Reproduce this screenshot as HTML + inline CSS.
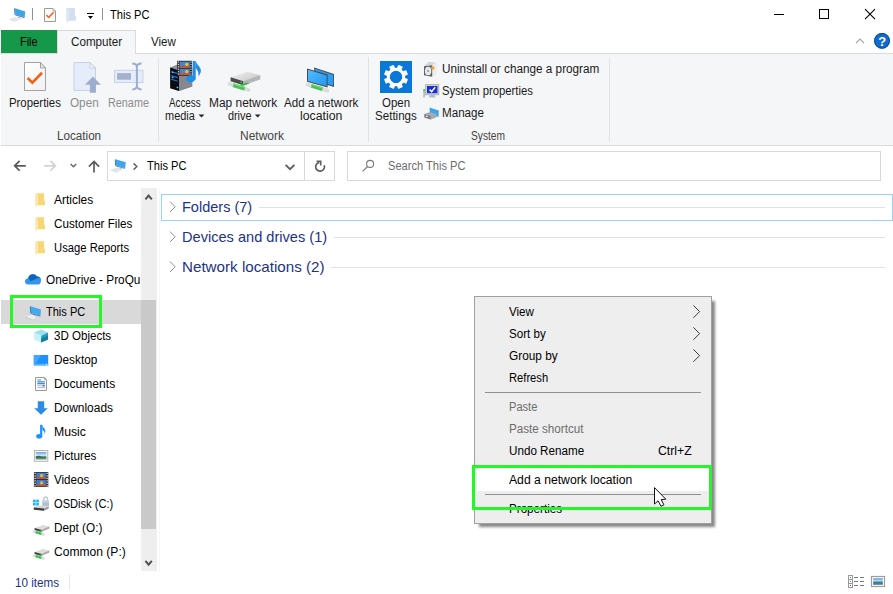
<!DOCTYPE html>
<html>
<head>
<meta charset="utf-8">
<title>This PC</title>
<style>
html,body{margin:0;padding:0;}
body{width:893px;height:594px;overflow:hidden;background:#fff;position:relative;font-family:"Liberation Sans",sans-serif;font-size:12px;color:#1e1e1e;}
.a{position:absolute;white-space:nowrap;}
.t{position:absolute;white-space:nowrap;line-height:14px;font-size:12px;color:#1a1a1a;transform-origin:0 0;}
.c{text-align:center;}
.dim{color:#8a8a8a;}
svg{position:absolute;overflow:visible;}
</style>
</head>
<body>
<!-- TITLE BAR -->
<div class="a" id="titlebar" style="left:0;top:0;width:893px;height:30px;background:#fff;"></div>
<div class="a" style="left:32px;top:8px;width:1px;height:12px;background:#909090;"></div>
<div class="a" style="left:102px;top:8px;width:1px;height:12px;background:#909090;"></div>


<!-- title icons -->
<svg style="left:0;top:0;" width="110" height="30" viewBox="0 0 110 30">
  <!-- PC -->
  <polygon points="15,8.3 25.2,11.6 24.7,17.3 15.5,14.6" fill="#3ea4e8"/>
  <polygon points="15,8.3 15.5,14.6 14.6,14.9 14.2,8.8" fill="#1c6fb5"/>
  <polygon points="15.5,14.6 24.7,17.3 24.3,17.9 15.1,15.2" fill="#2a7cc4"/>
  <polygon points="17.5,16.6 21.5,17.8 21,18.8 17,17.6" fill="#b9c1c9"/>
  <polygon points="9.3,19 14.5,17 20.5,19.6 15,21.6" fill="#e4e7ea"/>
  <polygon points="9.3,19 15,21.6 15,22.1 9.3,19.5" fill="#c5cad0"/>
  <!-- properties small -->
  <path d="M44.5,8.5 H53 L55.5,11 V21.5 H44.5 Z" fill="#fdfdfd" stroke="#9b9b9b" stroke-width="1"/>
  <path d="M53,8.5 V11 H55.5" fill="#e8e8e8" stroke="#9b9b9b" stroke-width="0.8"/>
  <path d="M46.3,15.2 L48.8,17.3 L53.6,12.2" fill="none" stroke="#ee6a2c" stroke-width="1.6"/>
  <!-- new folder disabled -->
  <path d="M66,8 H74.9 V15.8 H75.9 V20.7 H68 L66,20.7 Z" fill="#d3dfef"/>
  <path d="M66,8 L68.8,9.5 V20.7 L68,22.4 L66,20.7 Z" fill="#dfe8f4"/>
  <!-- dropdown -->
  <rect x="87" y="13" width="7" height="1" fill="#000"/>
  <polygon points="88,16 93,16 90.5,19" fill="#000"/>
</svg>


<svg style="left:753px;top:0;" width="140" height="60" viewBox="753 0 140 60">
  <rect x="774" y="14" width="10" height="1" fill="#000"/>
  <rect x="819.5" y="9.5" width="9" height="9" fill="none" stroke="#000" stroke-width="1"/>
  <path d="M865,9.2 L875,19.2 M875,9.2 L865,19.2" stroke="#000" stroke-width="1.1" fill="none"/>
  <path d="M856,43 L860,39 L864,43" stroke="#a8a8a8" stroke-width="1.1" fill="none"/>
  <circle cx="882" cy="40.8" r="7.9" fill="#0f6bcf"/>
  <circle cx="882" cy="40.8" r="7.4" fill="none" stroke="#0a4c9c" stroke-width="1"/>
  <text x="882.2" y="45.6" text-anchor="middle" font-family="Liberation Sans" font-weight="bold" font-size="13" fill="#fff">?</text>
</svg>

<!-- TAB ROW -->
<div class="a" style="left:1px;top:53px;width:892px;height:93px;background:#f5f6f7;border-top:1px solid #dadbdc;border-bottom:1px solid #dadbdc;box-sizing:border-box;"></div>
<div class="a" style="left:1px;top:30px;width:56px;height:23px;background:#16984a;"></div>
<div class="a" style="left:57px;top:30px;width:79px;height:24px;background:#f5f6f7;border:1px solid #dadbdc;border-bottom:none;box-sizing:border-box;"></div>

<!-- RIBBON -->
<div class="a" style="left:158px;top:57px;width:1px;height:85px;background:#e1e2e3;"></div>

<div class="a" style="left:368px;top:57px;width:1px;height:85px;background:#e1e2e3;"></div>

<div class="a" style="left:609px;top:57px;width:1px;height:85px;background:#e1e2e3;"></div>

<!-- ADDRESS BAR -->
<div class="a" style="left:107px;top:151px;width:228px;height:30px;border:1px solid #d9d9d9;box-sizing:border-box;background:#fff;"></div>
<div class="a" style="left:304px;top:152px;width:1px;height:28px;background:#d9d9d9;"></div>
<div class="a" style="left:347px;top:151px;width:534px;height:30px;border:1px solid #d9d9d9;box-sizing:border-box;background:#fff;"></div>

<!-- NAV PANE -->
<div class="a" style="left:1px;top:300px;width:140px;height:24px;background:#d9d9d9;"></div>
<!-- scrollbar -->
<div class="a" style="left:141px;top:188px;width:16px;height:383px;background:#eeeeee;"></div>
<div class="a" style="left:159px;top:188px;width:1px;height:383px;background:#f6f6f6;"></div>
<div class="a" style="left:141px;top:300px;width:15px;height:229px;background:#c9c9c9;"></div>
<!-- green highlight This PC -->

<!-- CONTENT -->
<div class="a" style="left:161px;top:194px;width:732px;height:27px;border:1px solid #99d1ff;box-sizing:border-box;"></div>
<div class="a" style="left:259px;top:207px;width:626px;height:1px;background:#e2e2e2;"></div>
<div class="a" style="left:334px;top:237px;width:551px;height:1px;background:#e2e2e2;"></div>
<div class="a" style="left:331px;top:267px;width:554px;height:1px;background:#e2e2e2;"></div>

<!-- CONTEXT MENU -->
<div class="a" id="ctx" style="left:474px;top:296px;width:238px;height:228px;background:#eeeeee;border:1px solid #a0a0a0;box-sizing:border-box;box-shadow:4px 4px 2.5px -1px rgba(0,0,0,0.47);"></div>
<div class="a" style="left:485px;top:392px;width:216px;height:1px;background:#919191;"></div>
<div class="a" style="left:477px;top:468px;width:233px;height:23px;background:#fff;"></div>
<div class="a" style="left:485px;top:494px;width:216px;height:1px;background:#919191;"></div>

<!-- RIBBON ICONS -->
<svg style="left:0;top:0;" width="893" height="594" viewBox="0 0 893 594">
<defs>
  <linearGradient id="gpage" x1="0" y1="0" x2="1" y2="1"><stop offset="0" stop-color="#ffffff"/><stop offset="1" stop-color="#f1f1f1"/></linearGradient>
  <linearGradient id="gblue" x1="0" y1="0" x2="1" y2="1"><stop offset="0" stop-color="#55bcff"/><stop offset="1" stop-color="#1f97f0"/></linearGradient>
  <linearGradient id="gdrv" x1="0" y1="0" x2="1" y2="1"><stop offset="0" stop-color="#f2f2f2"/><stop offset="1" stop-color="#bdbdbd"/></linearGradient>
</defs>
<!-- Properties -->
<path d="M24.5,62.5 H40.5 L45.5,68 V90.5 H24.5 Z" fill="url(#gpage)" stroke="#a3a3a3" stroke-width="1"/>
<path d="M40.5,62.5 V68 H45.5 Z" fill="#e9e9e9" stroke="#a3a3a3" stroke-width="1" stroke-linejoin="round"/>
<path d="M27.6,78 L32.4,82.6 L42,72.8" fill="none" stroke="#f0621e" stroke-width="2.7"/>
<!-- Open (disabled) -->
<path d="M74,62.5 H90 L95.5,68 V90.5 H74 Z" fill="#e6edfa" stroke="#c3d1e9" stroke-width="1"/>
<path d="M90,62.5 V68 H95.5 Z" fill="#f1f5fc" stroke="#c3d1e9" stroke-width="1" stroke-linejoin="round"/>
<path d="M92.9,76.6 L100.9,84.8 H95.9 V92.8 H89.9 V84.8 H84.9 Z" fill="#9eadcc"/>
<!-- Rename (disabled) -->
<rect x="114.5" y="70.3" width="28.4" height="12.2" fill="#e6edfa" stroke="#c3d1e9" stroke-width="1"/>
<rect x="117.1" y="73.1" width="13.9" height="6.6" fill="#a5b2cf"/>
<path d="M132.2,63.6 Q136.6,63.6 136.9,67 Q137.2,63.6 141.6,63.6 M136.9,66 V87 M132.2,89.4 Q136.6,89.4 136.9,86 Q137.2,89.4 141.6,89.4" fill="none" stroke="#9eadcc" stroke-width="2"/>

<!-- Access media -->
<polygon points="170.2,67.6 178.8,63.8 192.2,67.2 192.2,86.6 179,91 170.2,88.2" fill="#8f9398"/>
<polygon points="170.2,67.6 179,70.4 179,91 170.2,88.2" fill="#0c0c0e"/>
<polygon points="179,70.4 192.2,67.2 192.2,86.6 179,91" fill="#85898f"/>
<path d="M171.3,71.6 L177.8,73.6 M171.3,75.6 L177.8,77.6 M171.3,79.2 L177.8,81.2" stroke="#1f6fd6" stroke-width="1.1"/>
<circle cx="172.6" cy="72.3" r="0.9" fill="#39c8ff"/><circle cx="172.6" cy="77.4" r="0.9" fill="#39c8ff"/><circle cx="177.4" cy="87.4" r="0.9" fill="#39c8ff"/>
<rect x="177.2" y="60.8" width="15" height="15" fill="#2b2b2e"/>
<rect x="179.6" y="61.6" width="10.2" height="6.2" fill="#3f86d8"/>
<rect x="179.6" y="68.8" width="10.2" height="6.2" fill="#3f86d8"/>
<rect x="179.6" y="65.6" width="10.2" height="2.2" fill="#c9562b"/><rect x="179.6" y="73" width="10.2" height="2" fill="#c9562b"/>
<circle cx="186.8" cy="64.4" r="1.7" fill="#e7c232"/><circle cx="186.8" cy="71.6" r="1.7" fill="#e7c232"/>
<path d="M178.4,61.5 V75.5 M191,61.5 V75.5" stroke="#e8e8e8" stroke-width="1" stroke-dasharray="1.2 1.2"/>
<rect x="193" y="61" width="2.7" height="18.6" fill="#1c8fe9"/>
<path d="M195.6,61 Q196.6,64 199.2,66.4 Q202,69.6 200.2,73.6 Q199.6,75.2 198.2,76 Q199.4,72 195.6,68 Z" fill="#1c8fe9"/>
<ellipse cx="190.6" cy="78.8" rx="4.6" ry="3.6" fill="#1c8fe9"/>

<polygon points="198.6,114.6 204.4,114.6 201.5,117.6" fill="#222"/>
<polygon points="254.8,114.6 260.6,114.6 257.7,117.6" fill="#222"/>
<!-- Map network drive -->
<polygon points="230.6,77.2 247.4,71.8 260.2,75.2 260.2,79.2 243.4,85.2 230.6,81.2" fill="url(#gdrv)"/>
<polygon points="230.6,77.2 243.4,81.2 243.4,85.2 230.6,81.2" fill="#4b4b4b"/>
<polygon points="243.4,81.2 260.2,75.2 260.2,79.2 243.4,85.2" fill="#b5b5b5"/>
<rect x="240.4" y="81.6" width="1.8" height="1.2" fill="#43d15a" transform="rotate(17 241 82)"/>
<path d="M229.6,84 L248.6,90" stroke="#dcdcdc" stroke-width="3.8" stroke-linecap="round"/>
<path d="M233.2,85.1 L244.6,88.7" stroke="#45c453" stroke-width="3.8"/>
<path d="M233.2,84.0 L244.6,87.6" stroke="#7fdc88" stroke-width="1"/>
<polygon points="239.6,85 246.6,82.6 249.8,83.6 242.8,86.0" fill="#3fb84d"/>

<!-- Add a network location -->
<polygon points="314.2,67.4 334,73.9 334,87 314.2,81" fill="#4a4a4a"/>
<polygon points="315.2,68.8 333.2,74.7 333.2,85.8 315.2,80.3" fill="#2a9df4"/>
<polygon points="307,68.4 327.6,74.6 327.6,87.6 307,81.8" fill="#4a4a4a"/>
<polygon points="308,69.8 326.6,75.4 326.6,86.2 308,81" fill="url(#gblue)"/>
<path d="M307.6,84.6 L327.4,90.6" stroke="#dcdcdc" stroke-width="3.8" stroke-linecap="round"/>
<path d="M311.4,85.75 L322.4,89.1" stroke="#45c453" stroke-width="3.8"/>
<path d="M311.4,84.7 L322.4,88.0" stroke="#7fdc88" stroke-width="1"/>

<!-- Settings -->
<rect x="380" y="61" width="32" height="32" fill="#0a78d7"/>
<g transform="translate(396,76.9) rotate(22.5)" fill="#fff">
  <circle r="9.2"/>
  <g>
  <rect x="-2.5" y="-12" width="5" height="6" rx="0.6"/>
  <rect x="-2.5" y="6" width="5" height="6" rx="0.6"/>
  <rect x="-12" y="-2.5" width="6" height="5" rx="0.6"/>
  <rect x="6" y="-2.5" width="6" height="5" rx="0.6"/>
  </g>
  <g transform="rotate(45)">
  <rect x="-2.5" y="-12" width="5" height="6" rx="0.6"/>
  <rect x="-2.5" y="6" width="5" height="6" rx="0.6"/>
  <rect x="-12" y="-2.5" width="6" height="5" rx="0.6"/>
  <rect x="6" y="-2.5" width="6" height="5" rx="0.6"/>
  </g>
  <circle r="6.2" fill="#0a78d7"/>
</g>

<!-- Uninstall -->
<polygon points="424,66.2 428.6,61.8 436.8,62.8 432.2,65.2" fill="#d4d7d9"/>
<polygon points="432.2,65.2 436.8,62.8 436.8,74.4 432.2,76.8" fill="#ececec"/>
<polygon points="424,66.2 432.2,65.2 432.2,76.8 424,75.2" fill="#596268"/>
<ellipse cx="428.1" cy="71" rx="3.2" ry="4.3" fill="#e6ebee"/>
<ellipse cx="428.1" cy="71" rx="0.9" ry="1.3" fill="#8d979e"/>
<circle cx="432.8" cy="68" r="1.8" fill="#f2a23a"/>
<!-- System properties -->
<rect x="425.6" y="84.6" width="13.2" height="10.2" fill="#cfd1d3" stroke="#a9acaf" stroke-width="0.8"/>
<rect x="427" y="86" width="10.4" height="7.2" fill="#1a2fd0"/>
<path d="M429.6,89.6 L431.6,91.6 L435.2,87.2" stroke="#fff" stroke-width="1.5" fill="none"/>
<polygon points="430.2,94.8 434.4,94.8 435.8,97.4 428.6,97.4" fill="#b9bcbf"/>
<rect x="423.3" y="90.4" width="1.6" height="7" fill="#b4b8bb"/>
<rect x="423.3" y="89" width="1.6" height="2.2" fill="#3ccf4a"/>
<!-- Manage -->
<polygon points="429.6,107.6 438.8,110.6 438.6,117 429.8,114.2" fill="#3ea4f0"/>
<polygon points="424.4,114 430,112 436.4,114.2 436.4,117.6 430.6,119.4 424.4,117.4" fill="#a7abaf"/>
<polygon points="424.4,114 430.6,116 430.6,119.4 424.4,117.4" fill="#7c8185"/>
<rect x="426" y="115.6" width="1.6" height="1.4" fill="#e8e8e8"/>
</svg>
<!-- ADDRESS ICONS -->
<svg style="left:0;top:0;" width="893" height="594" viewBox="0 0 893 594">
<path d="M25.8,165.8 H14.8 M19.6,160.9 L14.6,165.8 L19.6,170.7" fill="none" stroke="#5b5b5b" stroke-width="1.7"/>
<path d="M44.2,165.8 H55.2 M50.4,160.9 L55.4,165.8 L50.4,170.7" fill="none" stroke="#d2d2d2" stroke-width="1.7"/>
<path d="M70.6,164 L73.4,166.8 L76.2,164" fill="none" stroke="#666" stroke-width="1.4"/>
<path d="M94,172.4 V161.8 M88.9,166.6 L94,161.5 L99.1,166.6" fill="none" stroke="#5b5b5b" stroke-width="1.7"/>
<!-- PC icon -->
<polygon points="115.6,159.2 125.8,162.2 125.1,168.2 116.2,165.6" fill="#3ea6ee"/>
<polygon points="115.6,159.2 116.2,165.6 115.3,165.9 114.8,159.7" fill="#1c6fb5"/>
<polygon points="116.2,165.6 125.1,168.2 124.7,168.8 115.8,166.2" fill="#2a7cc4"/>
<polygon points="118.6,167.3 122,168.3 121.6,169.3 118.2,168.3" fill="#b9c1c9"/>
<polygon points="110.6,169.7 116.6,167.6 122.6,169.8 116.8,172.2" fill="#e3e6e9"/>
<polygon points="110.6,169.7 116.8,172.2 116.8,172.8 110.6,170.3" fill="#c5cad0"/>
<path d="M133.6,163.4 L136.8,166.5 L133.6,169.6" fill="none" stroke="#666" stroke-width="1.5"/>
<path d="M285.6,164.8 L290,169.2 L294.4,164.8" fill="none" stroke="#5f5f5f" stroke-width="1.9"/>
<!-- refresh -->
<path d="M324.2,165.2 A4.4,4.4 0 1 1 319.4,162.4" fill="none" stroke="#5f5f5f" stroke-width="1.7"/>
<path d="M316.6,161.3 H320.7 V165.4" fill="none" stroke="#5f5f5f" stroke-width="1.6"/>
<!-- search -->
<circle cx="370.1" cy="163.9" r="3.5" fill="none" stroke="#7a7a7a" stroke-width="1.1"/>
<path d="M367.6,166.5 L362.6,171.4" stroke="#7a7a7a" stroke-width="1.1"/>
</svg>
<!-- NAV ICONS -->
<svg style="left:0;top:0;" width="893" height="594" viewBox="0 0 893 594">
<defs><linearGradient id="gpic" x1="0" y1="0" x2="0" y2="1"><stop offset="0" stop-color="#5fa8e8"/><stop offset="0.45" stop-color="#cfe6f5"/><stop offset="0.6" stop-color="#5d8f6a"/><stop offset="1" stop-color="#a8c2b8"/></linearGradient></defs>
<path d="M36.4,193.3 H44.1 V200.8 H44.9 V205.2 H37.6 Z" fill="#f7d774"/><path d="M35.2,194.0 L38,194.8 V205.6 L36.6,206.8 L35.2,205.4 Z" fill="#fbe8aa"/>
<path d="M36.4,217.3 H44.1 V224.8 H44.9 V229.2 H37.6 Z" fill="#f7d774"/><path d="M35.2,218.0 L38,218.8 V229.6 L36.6,230.8 L35.2,229.4 Z" fill="#fbe8aa"/>
<path d="M36.4,241.3 H44.1 V248.8 H44.9 V253.2 H37.6 Z" fill="#f7d774"/><path d="M35.2,242.0 L38,242.8 V253.6 L36.6,254.8 L35.2,253.4 Z" fill="#fbe8aa"/>
<!-- OneDrive -->
<path d="M28.6,284.6 Q24.9,284.4 25,281.2 Q25.2,278.6 28.2,278.2 Q29,274.4 33,274.3 Q35.6,274.3 37,276.6 Q40.2,276.2 41,279 Q41.4,284.4 38,284.6 Z" fill="#2f97ea"/>
<path d="M28.2,278.2 Q29,274.4 33,274.3 Q35.6,274.3 37,276.6 Q38.6,276.4 39.8,277.2 L30.6,281.2 Q29.4,279 28.2,278.2 Z" fill="#0f62bf"/>
<!-- This PC -->
<polygon points="30.6,306.2 41,309.6 40.5,315.8 31.3,313.3" fill="#45a9ee"/>
<polygon points="30.6,306.2 31.3,313.3 30.4,313.6 29.8,306.8" fill="#1c6fb5"/>
<polygon points="31.3,313.3 40.5,315.8 40.1,316.5 30.9,314" fill="#3a7fb8"/>
<polygon points="33.8,315.2 37.2,316.2 36.8,317.2 33.4,316.2" fill="#aab2ba"/>
<polygon points="25.6,316.8 31.8,314.8 37.2,316.9 32.6,319.6" fill="#eceef0"/>
<polygon points="25.6,316.8 32.6,319.6 32.6,320.2 25.6,317.4" fill="#bfc4ca"/>
<!-- 3D Objects -->
<polygon points="41.2,329.4 48,332.5 41.2,335.7 33.9,332.5" fill="#9fe0ec"/>
<polygon points="33.9,332.5 41.2,335.7 41.2,342.5 33.9,339.5" fill="#c9f0f6"/>
<polygon points="41.2,335.7 48,332.5 48,339.5 41.2,342.5" fill="#1b9fc6"/>
<polygon points="41.2,338.5 48,335.5 48,339.5 41.2,342.5" fill="#16809f"/>
<!-- Desktop -->
<rect x="33.8" y="355" width="14.4" height="10.4" fill="#1e90ff"/>
<polygon points="33.8,355 41,355 36,363.6 33.8,363.6" fill="#45a6ff"/>
<rect x="33.8" y="363.8" width="14.4" height="1.6" fill="#58b2ff"/>
<rect x="46" y="364" width="1.2" height="1" fill="#fff"/>
<!-- Documents -->
<path d="M35.5,377.5 H44.4 L46.5,379.6 V390.5 H35.5 Z" fill="#fcfcfc" stroke="#9a9a9a" stroke-width="1"/>
<path d="M44.4,377.5 V379.6 H46.5" fill="none" stroke="#9a9a9a" stroke-width="0.8"/>
<path d="M37.4,381.8 H44.8 M37.4,383.6 H44.8" stroke="#3b8de0" stroke-width="1.2"/>
<path d="M37.4,380 H41" stroke="#3b8de0" stroke-width="1"/>
<path d="M37.4,385.6 H41.6 M37.4,387.6 H44.8" stroke="#b5b5b5" stroke-width="1"/>
<rect x="42.4" y="384.8" width="2.4" height="1.8" fill="#4a86c8"/>
<!-- Downloads -->
<path d="M37.8,401.2 H44.2 V408.2 H47.8 L41,414.8 L34.2,408.2 H37.8 Z" fill="#2b8be6"/>
<!-- Music -->
<rect x="40.1" y="424.8" width="2.2" height="11.6" fill="#1e90ff"/>
<path d="M42.3,424.8 Q42.8,427 44.4,428.6 Q46.2,430.8 44.6,434.4 Q45,431.6 42.3,429.6 Z" fill="#1e90ff"/>
<ellipse cx="39.2" cy="436.2" rx="3" ry="2.3" fill="#1e90ff"/>
<!-- Pictures -->
<rect x="34.4" y="450.5" width="13.4" height="10.8" fill="#fbfbfb" stroke="#b4b4b4" stroke-width="1"/>
<rect x="35.8" y="452" width="10.6" height="7.8" fill="url(#gpic)"/>
<path d="M35.8,456.6 Q39,455 41,456.4 Q43.6,457.6 46.4,457.4 V458.4 H35.8 Z" fill="#3f6b52"/>
<!-- Videos -->
<rect x="33.9" y="472" width="14.4" height="15" fill="#333335"/>
<rect x="36.4" y="472.8" width="9.4" height="6.2" fill="#3d7fd6"/>
<rect x="36.4" y="480" width="9.4" height="6.2" fill="#3d7fd6"/>
<rect x="36.4" y="477" width="9.4" height="2" fill="#c4562e"/><rect x="36.4" y="484.4" width="9.4" height="1.8" fill="#c4562e"/>
<circle cx="41.6" cy="475.6" r="1.6" fill="#e3bd3a"/><circle cx="41.6" cy="482.8" r="1.6" fill="#e3bd3a"/>
<path d="M35.1,472.8 V486.6 M47.1,472.8 V486.6" stroke="#ededed" stroke-width="1.2" stroke-dasharray="1.3 1.2"/>
<!-- OSDisk -->
<rect x="33" y="499.6" width="2.7" height="2.7" fill="#1db8f5"/><rect x="36.2" y="499.6" width="2.7" height="2.7" fill="#1db8f5"/>
<rect x="33" y="502.8" width="2.7" height="2.7" fill="#1db8f5"/><rect x="36.2" y="502.8" width="2.7" height="2.7" fill="#1db8f5"/>
<path d="M43.8,501 V499.2 Q43.8,497 45.7,497 Q47.6,497 47.6,499.2 V501" fill="none" stroke="#c0c8cf" stroke-width="1.3"/>
<rect x="42.3" y="500.6" width="6.7" height="5.6" fill="#aebfce"/>
<rect x="42.3" y="500.6" width="6.7" height="2" fill="#c6d3de"/>
<polygon points="33.8,507 38,505.4 48.6,505.8 48.6,508.6 44,510.6 33.8,509.6" fill="#d6d6d6"/>
<polygon points="33.8,507.4 44,508.4 44,510.8 33.8,509.8" fill="#3c3c3c"/>
<polygon points="44,508.4 48.6,506.4 48.6,508.8 44,510.8" fill="#9d9d9d"/>
<polygon points="34.6,528.0 42.9,525.0 49.3,526.4 49.3,528.6 41.6,531.8 34.6,529.9" fill="#dcdcdc"/><polygon points="34.6,528.0 41.6,529.9 41.6,531.8 34.6,529.9" fill="#3e3e3e"/><polygon points="41.6,529.9 49.3,526.6 49.3,528.6 41.6,531.8" fill="#a9a9a9"/><path d="M34.2,531.6 L43.4,534.5" stroke="#d9d9d9" stroke-width="2.4" stroke-linecap="round"/><path d="M35.6,532.0 L41.4,533.9" stroke="#45c453" stroke-width="2.4"/><polygon points="38.4,531.2 41,530.4 42.6,530.9 40,531.8" fill="#3fb84d"/>
<polygon points="34.6,552.0 42.9,549.0 49.3,550.4 49.3,552.6 41.6,555.8 34.6,553.9" fill="#dcdcdc"/><polygon points="34.6,552.0 41.6,553.9 41.6,555.8 34.6,553.9" fill="#3e3e3e"/><polygon points="41.6,553.9 49.3,550.6 49.3,552.6 41.6,555.8" fill="#a9a9a9"/><path d="M34.2,555.6 L43.4,558.5" stroke="#d9d9d9" stroke-width="2.4" stroke-linecap="round"/><path d="M35.6,556.0 L41.4,557.9" stroke="#45c453" stroke-width="2.4"/><polygon points="38.4,555.2 41,554.4 42.6,554.9 40,555.8" fill="#3fb84d"/>
</svg>
<!-- MISC ICONS -->
<svg style="left:0;top:0;" width="893" height="594" viewBox="0 0 893 594">
<path d="M145.4,199.4 L148.6,195.6 L151.8,199.4" fill="none" stroke="#505050" stroke-width="2"/>
<path d="M145.4,560.8 L148.6,564.6 L151.8,560.8" fill="none" stroke="#505050" stroke-width="2"/>
<!-- content chevrons -->
<path d="M170,201.6 L175.2,206.8 L170,212" fill="none" stroke="#8f8f8f" stroke-width="1"/>
<path d="M170,231.6 L175.2,236.8 L170,242" fill="none" stroke="#8f8f8f" stroke-width="1"/>
<path d="M170,261.6 L175.2,266.8 L170,272" fill="none" stroke="#8f8f8f" stroke-width="1"/>
</svg>
<svg style="left:0;top:0;" width="893" height="594" viewBox="0 0 893 594">
<path d="M693.4,305.4 L699.6,311.6 L693.4,317.8" fill="none" stroke="#3a3a3a" stroke-width="1"/>
<path d="M693.4,327.4 L699.6,333.6 L693.4,339.8" fill="none" stroke="#3a3a3a" stroke-width="1"/>
<path d="M693.4,349.4 L699.6,355.6 L693.4,361.8" fill="none" stroke="#3a3a3a" stroke-width="1"/>
</svg>
<div class="t" style="left:110px;top:8px;font-size:12px;line-height:14px;color:#000;transform:scaleX(0.9231);">This PC</div>
<div class="t" style="left:20px;top:35px;font-size:12px;line-height:14px;color:#000;transform:scaleX(0.9105);">File</div>
<div class="t" style="left:71px;top:35px;font-size:12px;line-height:14px;color:#1a1a1a;transform:scaleX(0.9714);">Computer</div>
<div class="t" style="left:151px;top:35px;font-size:12px;line-height:14px;color:#1a1a1a;transform:scaleX(0.9631);">View</div>
<div class="t" style="left:9px;top:96px;font-size:12px;line-height:14px;color:#1a1a1a;transform:scaleX(0.9475);">Properties</div>
<div class="t" style="left:70px;top:96px;font-size:12px;line-height:14px;color:#8c8c8c;transform:scaleX(0.9774);">Open</div>
<div class="t" style="left:108px;top:96px;font-size:12px;line-height:14px;color:#8c8c8c;transform:scaleX(0.9022);">Rename</div>
<div class="t" style="left:57px;top:129px;font-size:12px;line-height:14px;color:#444;transform:scaleX(0.9721);">Location</div>
<div class="t" style="left:169px;top:96px;font-size:12px;line-height:14px;color:#1a1a1a;transform:scaleX(0.8183);">Access</div>
<div class="t" style="left:165px;top:109px;font-size:12px;line-height:14px;color:#1a1a1a;transform:scaleX(0.9130);">media</div>
<div class="t" style="left:209px;top:96px;font-size:12px;line-height:14px;color:#1a1a1a;transform:scaleX(0.9935);">Map network</div>
<div class="t" style="left:228px;top:109px;font-size:12px;line-height:14px;color:#1a1a1a;transform:scaleX(0.9020);">drive</div>
<div class="t" style="left:284px;top:96px;font-size:12px;line-height:14px;color:#1a1a1a;transform:scaleX(0.9694);">Add a network</div>
<div class="t" style="left:300px;top:109px;font-size:12px;line-height:14px;color:#1a1a1a;transform:scaleX(1.0233);">location</div>
<div class="t" style="left:240px;top:129px;font-size:12px;line-height:14px;color:#444;transform:scaleX(1.0000);">Network</div>
<div class="t" style="left:382px;top:96px;font-size:12px;line-height:14px;color:#1a1a1a;transform:scaleX(0.9565);">Open</div>
<div class="t" style="left:375px;top:109px;font-size:12px;line-height:14px;color:#1a1a1a;transform:scaleX(0.9651);">Settings</div>
<div class="t" style="left:442px;top:62px;font-size:12px;line-height:14px;color:#1a1a1a;transform:scaleX(0.9788);">Uninstall or change a program</div>
<div class="t" style="left:442px;top:84px;font-size:12px;line-height:14px;color:#1a1a1a;transform:scaleX(0.9392);">System properties</div>
<div class="t" style="left:442px;top:106px;font-size:12px;line-height:14px;color:#1a1a1a;transform:scaleX(0.9674);">Manage</div>
<div class="t" style="left:471px;top:129px;font-size:12px;line-height:14px;color:#444;transform:scaleX(0.8510);">System</div>
<div class="t" style="left:147px;top:159px;font-size:12px;line-height:14px;color:#000;transform:scaleX(0.9231);">This PC</div>
<div class="t" style="left:388px;top:159px;font-size:12px;line-height:14px;color:#6d6d6d;transform:scaleX(0.9249);">Search This PC</div>
<div class="t" style="left:54px;top:193px;font-size:12px;line-height:14px;color:#000;transform:scaleX(0.9949);">Articles</div>
<div class="t" style="left:54px;top:217px;font-size:12px;line-height:14px;color:#000;transform:scaleX(0.9707);">Customer Files</div>
<div class="t" style="left:54px;top:241px;font-size:12px;line-height:14px;color:#000;transform:scaleX(0.9379);">Usage Reports</div>
<div class="t" style="left:46px;top:273px;font-size:12px;line-height:14px;color:#000;transform:scaleX(0.9827);">OneDrive - ProQu</div>
<div class="t" style="left:46px;top:305px;font-size:12px;line-height:14px;color:#000;transform:scaleX(0.9183);">This PC</div>
<div class="t" style="left:54px;top:329px;font-size:12px;line-height:14px;color:#000;transform:scaleX(0.9627);">3D Objects</div>
<div class="t" style="left:54px;top:353px;font-size:12px;line-height:14px;color:#000;transform:scaleX(0.9839);">Desktop</div>
<div class="t" style="left:54px;top:377px;font-size:12px;line-height:14px;color:#000;transform:scaleX(1.0091);">Documents</div>
<div class="t" style="left:54px;top:401px;font-size:12px;line-height:14px;color:#000;transform:scaleX(0.9932);">Downloads</div>
<div class="t" style="left:54px;top:425px;font-size:12px;line-height:14px;color:#000;transform:scaleX(1.0194);">Music</div>
<div class="t" style="left:54px;top:449px;font-size:12px;line-height:14px;color:#000;transform:scaleX(0.9744);">Pictures</div>
<div class="t" style="left:54px;top:473px;font-size:12px;line-height:14px;color:#000;transform:scaleX(0.9667);">Videos</div>
<div class="t" style="left:54px;top:497px;font-size:12px;line-height:14px;color:#000;transform:scaleX(0.9265);">OSDisk (C:)</div>
<div class="t" style="left:54px;top:521px;font-size:12px;line-height:14px;color:#000;transform:scaleX(0.9805);">Dept (O:)</div>
<div class="t" style="left:54px;top:545px;font-size:12px;line-height:14px;color:#000;transform:scaleX(1.0064);">Common (P:)</div>
<div class="t" style="left:182px;top:198px;font-size:15px;line-height:17px;color:#1e3287;transform:scaleX(0.9678);">Folders (7)</div>
<div class="t" style="left:182px;top:228px;font-size:15px;line-height:17px;color:#1e3287;transform:scaleX(0.9727);">Devices and drives (1)</div>
<div class="t" style="left:182px;top:258px;font-size:15px;line-height:17px;color:#1e3287;transform:scaleX(1.0121);">Network locations (2)</div>
<div class="t" style="left:509px;top:305px;font-size:12px;line-height:14px;color:#000;transform:scaleX(0.9670);">View</div>
<div class="t" style="left:509px;top:327px;font-size:12px;line-height:14px;color:#000;transform:scaleX(0.9658);">Sort by</div>
<div class="t" style="left:509px;top:349px;font-size:12px;line-height:14px;color:#000;transform:scaleX(0.9868);">Group by</div>
<div class="t" style="left:509px;top:371px;font-size:12px;line-height:14px;color:#000;transform:scaleX(0.9309);">Refresh</div>
<div class="t" style="left:509px;top:400px;font-size:12px;line-height:14px;color:#6d6d6d;transform:scaleX(0.9223);">Paste</div>
<div class="t" style="left:509px;top:422px;font-size:12px;line-height:14px;color:#6d6d6d;transform:scaleX(0.9707);">Paste shortcut</div>
<div class="t" style="left:509px;top:444px;font-size:12px;line-height:14px;color:#000;transform:scaleX(0.9714);">Undo Rename</div>
<div class="t" style="left:658px;top:444px;font-size:12px;line-height:14px;color:#000;transform:scaleX(1.0229);">Ctrl+Z</div>
<div class="t" style="left:509px;top:473px;font-size:12px;line-height:14px;color:#000;transform:scaleX(1.0145);">Add a network location</div>
<div class="t" style="left:509px;top:502px;font-size:12px;line-height:14px;color:#000;transform:scaleX(0.9696);">Properties</div>
<div class="t" style="left:15px;top:576px;font-size:12px;line-height:14px;color:#1e3287;transform:scaleX(0.9733);">10 items</div>
<!--OVERLAY-->
<div class="a" style="left:10px;top:295px;width:92px;height:33px;border:3px solid #27f52b;box-sizing:border-box;"></div>
<div class="a" style="left:472px;top:465px;width:240px;height:45px;border:3px solid #27f52b;box-sizing:border-box;"></div>

<svg style="left:0;top:0;" width="893" height="594" viewBox="0 0 893 594">
<path d="M654.5,487.6 V504 L658.1,500.8 L661,506.2 L663.9,504.8 L661.2,499.6 L665.8,499.2 Z" fill="#fff" stroke="#10101c" stroke-width="1" stroke-linejoin="miter"/>
<!-- status icons -->
<rect x="848.5" y="575.5" width="4" height="12" fill="#fff" stroke="#9a9a9a" stroke-width="1"/>
<path d="M848.5,579.5 H852.5 M848.5,583.5 H852.5" stroke="#9a9a9a" stroke-width="1"/>
<rect x="850" y="577" width="1" height="1" fill="#4a7a6a"/><rect x="850" y="581" width="1" height="1" fill="#4f96ff"/><rect x="850" y="585" width="1" height="1" fill="#e02020"/>
<path d="M854,577.5 H858 M860,577.5 H864 M854,581.5 H858 M860,581.5 H864 M854,585.5 H858 M860,585.5 H864" stroke="#7a7a7a" stroke-width="1.1"/>
<rect x="871.5" y="576.5" width="13" height="10" fill="#fff" stroke="#9c9c9c" stroke-width="1.2"/>
<defs><linearGradient id="gpic2" x1="0" y1="0" x2="0" y2="1"><stop offset="0" stop-color="#4f96f0"/><stop offset="0.4" stop-color="#b9dcf5"/><stop offset="0.6" stop-color="#4f7d66"/><stop offset="1" stop-color="#3d78c0"/></linearGradient></defs>
<rect x="873.2" y="578.2" width="9.6" height="6.6" fill="url(#gpic2)"/>
</svg>
<!-- STATUS BAR -->
<div class="a" style="left:69px;top:575px;width:1px;height:14px;background:#e6e6e6;"></div>
</body>
</html>
